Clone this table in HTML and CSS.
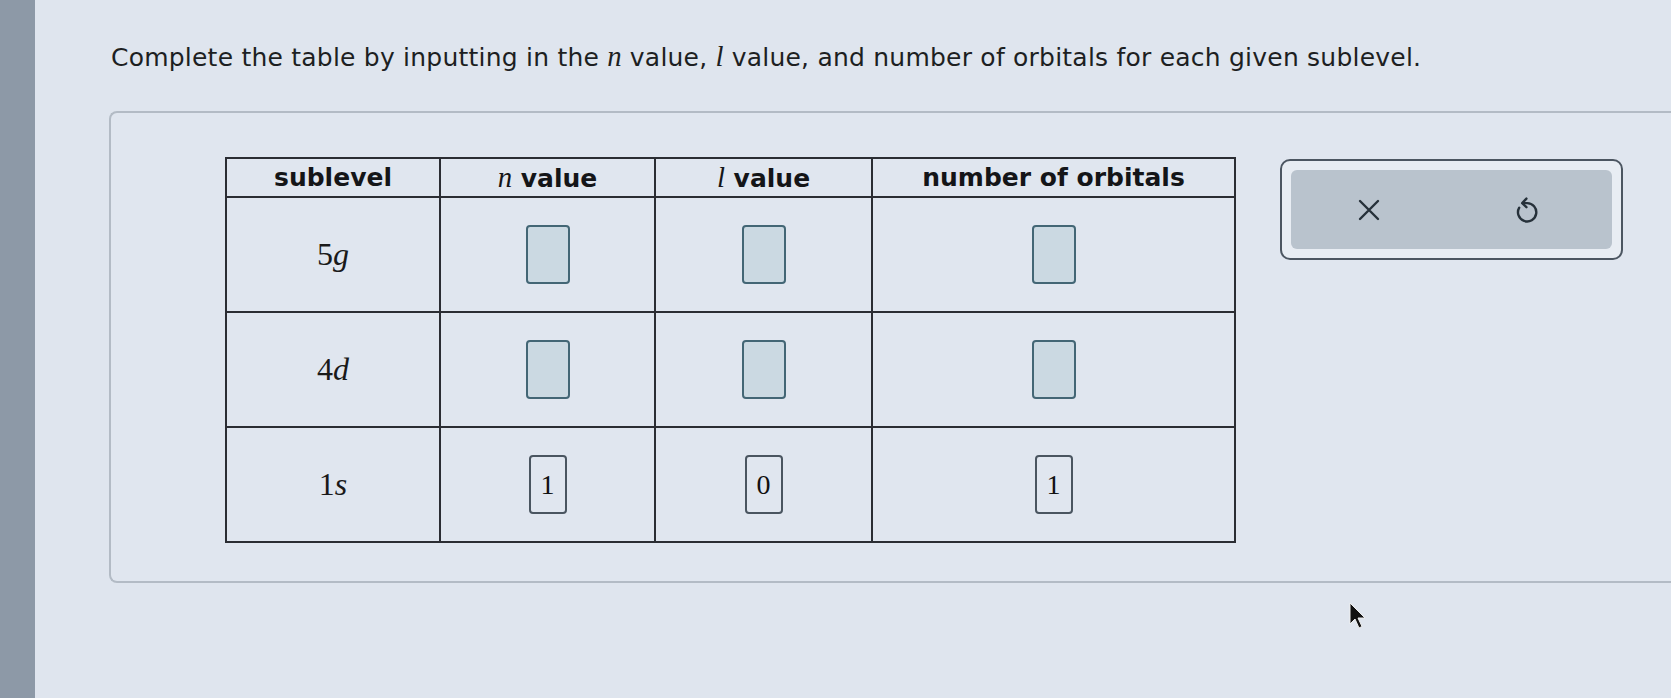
FILE: index.html
```html
<!DOCTYPE html>
<html>
<head>
<meta charset="utf-8">
<link rel="stylesheet" href="styles.css">
</head>
<body>
<div class="screen">
  <div class="strip"></div>
  <main class="main">
    <p class="prompt">Complete the table by inputting in the <i class="m">n</i> value, <i class="m">l</i> value, and number of orbitals for each given sublevel.</p>
    <section class="panel">
      <table class="grid">
        <colgroup>
          <col class="c1"><col class="c2"><col class="c3"><col class="c4">
        </colgroup>
        <thead>
          <tr>
            <th>sublevel</th>
            <th><i class="m">n</i> value</th>
            <th><i class="m">l</i> value</th>
            <th>number of orbitals</th>
          </tr>
        </thead>
        <tbody>
          <tr>
            <td class="sub">5<i>g</i></td>
            <td><span class="box empty"></span></td>
            <td><span class="box empty"></span></td>
            <td><span class="box empty"></span></td>
          </tr>
          <tr>
            <td class="sub">4<i>d</i></td>
            <td><span class="box empty"></span></td>
            <td><span class="box empty"></span></td>
            <td><span class="box empty"></span></td>
          </tr>
          <tr>
            <td class="sub">1<i>s</i></td>
            <td><span class="box filled">1</span></td>
            <td><span class="box filled">0</span></td>
            <td><span class="box filled">1</span></td>
          </tr>
        </tbody>
      </table>
      <div class="tools">
        <div class="tools-inner">
          <button class="tool" aria-label="clear">
            <svg width="24" height="24" viewBox="0 0 24 24"><path d="M3 3 L21 21 M21 3 L3 21" stroke="#26313a" stroke-width="2.4" fill="none" stroke-linecap="round"/></svg>
          </button>
          <button class="tool" aria-label="undo">
            <svg width="30" height="32" viewBox="0 0 26 28"><path d="M6.2 12 A8 8 0 1 0 13 8 L9.5 8" stroke="#26313a" stroke-width="2.1" fill="none" stroke-linecap="round" stroke-linejoin="round"/><path d="M12.5 4 L8.8 8 L12.5 11.5" stroke="#26313a" stroke-width="2.1" fill="none" stroke-linecap="round" stroke-linejoin="round"/></svg>
          </button>
        </div>
      </div>
    </section>
  </main>
  <svg class="cursor" width="18" height="28" viewBox="0 0 18 28"><path d="M1 1 L1 22 L6 17 L10 26 L13 24.5 L9 16 L16 16 Z" fill="#111" stroke="#eee" stroke-width="1"/></svg>
</div>
</body>
</html>
```

FILE: styles.css
```css
html, body {
  margin: 0;
  padding: 0;
  background: #dde4ed;
}
.screen {
  position: relative;
  display: flex;
  width: 1671px;
  height: 698px;
  overflow: hidden;
  background: #dfe5ee;
}
.strip {
  width: 35px;
  flex: none;
  background: #8d99a7;
}
.main {
  flex: 1;
  padding: 0 0 0 74px;
  min-width: 0;
}
.prompt {
  margin: 40px 0 0 2px;
  font-family: "DejaVu Sans", Verdana, sans-serif;
  font-size: 25px;
  line-height: 32px;
  color: #1d1f22;
  letter-spacing: 0.22px;
  white-space: nowrap;
}
.m {
  font-family: "Liberation Serif", "Times New Roman", serif;
  font-style: italic;
  font-size: 1.15em;
  letter-spacing: 0;
}
.panel {
  margin-top: 37px;
  height: 424px;
  margin-right: -20px;
  border: 2px solid #b3bbc5;
  border-right: none;
  border-radius: 8px 0 0 8px;
  background: #e0e6ef;
  display: flex;
  align-items: flex-start;
  padding: 44px 0 0 114px;
}
.grid {
  border-collapse: collapse;
  table-layout: fixed;
  width: 1009px;
  background: #e0e6ef;
  flex: none;
}
.c1 { width: 214px; }
.c2 { width: 215px; }
.c3 { width: 217px; }
.c4 { width: 363px; }
.grid th, .grid td {
  border: 2px solid #2b2d33;
  text-align: center;
  padding: 0;
}
.grid th {
  height: 37px;
  line-height: 1;
  font-family: "DejaVu Sans", Verdana, sans-serif;
  font-weight: bold;
  font-size: 25px;
  letter-spacing: 0;
  color: #141518;
}
.grid th .m {
  font-weight: normal;
  font-size: 1.15em;
}
.grid td {
  height: 113px;
}
.sub {
  font-family: "Liberation Serif", "Times New Roman", serif;
  font-size: 32px;
  color: #1a1a1a;
}
.sub i { font-style: italic; }
.box {
  display: inline-flex;
  align-items: center;
  justify-content: center;
  box-sizing: border-box;
  height: 59px;
  border-radius: 4px;
  vertical-align: middle;
}
.box.empty {
  width: 44px;
  background: #cbd9e2;
  border: 2px solid #436675;
}
.box.filled {
  width: 38px;
  border: 2px solid #4a5560;
  background: #e0e6ef;
  font-family: "Liberation Serif", "Times New Roman", serif;
  font-size: 28px;
  color: #111;
}
.tools {
  margin-left: 44px;
  margin-top: 2px;
  width: 343px;
  height: 101px;
  box-sizing: border-box;
  border: 2px solid #4c5661;
  border-radius: 10px;
  background: #e8edf3;
  padding: 9px;
  flex: none;
}
.tools-inner {
  height: 100%;
  border-radius: 6px;
  background: #b9c3cd;
  display: flex;
  align-items: center;
  gap: 118px;
  padding: 0 0 0 58px;
}
.tool {
  background: none;
  border: none;
  padding: 0;
  display: flex;
  align-items: center;
  justify-content: center;
  width: 40px;
  height: 40px;
}
.cursor {
  position: absolute;
  left: 1349px;
  top: 602px;
}
```
